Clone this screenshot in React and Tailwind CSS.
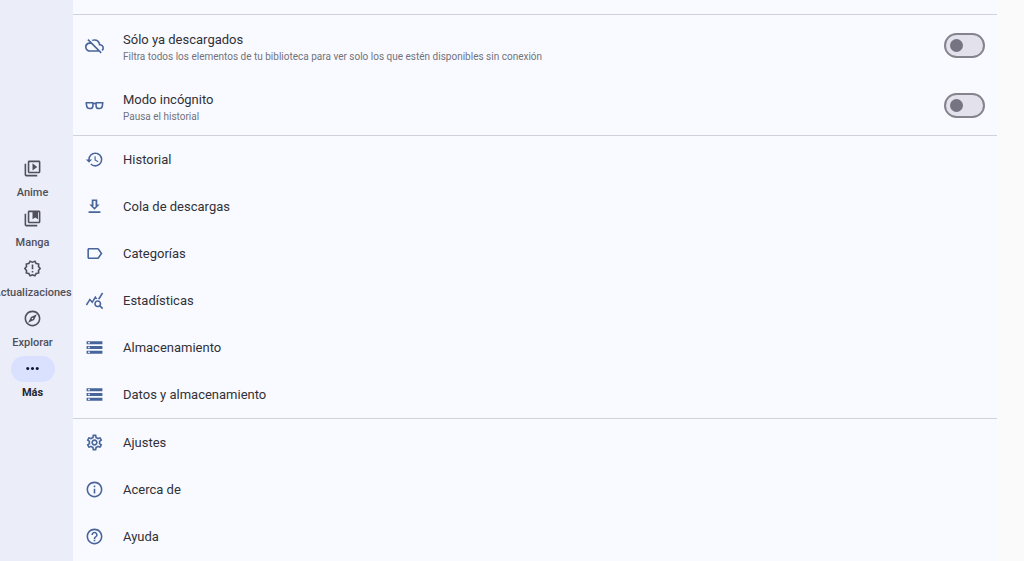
import { useState } from "react";
import {
  MdOutlineVideoLibrary,
  MdOutlineNewReleases,
  MdOutlineExplore,
  MdMoreHoriz,
  MdOutlineCloudOff,
  MdHistory,
  MdLabelOutline,
  MdQueryStats,
  MdStorage,
  MdOutlineSettings,
  MdOutlineInfo,
  MdHelpOutline,
} from "react-icons/md";

function GlassesIcon({ className }) {
  return (
    <svg
      viewBox="0 0 24 24"
      className={className}
      fill="none"
      stroke="currentColor"
      strokeWidth="2"
      strokeLinejoin="round"
      aria-hidden="true"
    >
      <path d="M1.500 8.500H10v3.700c0 2.200-1.400 3.600-3.400 3.600H5.600c-2 0-3.200-1.200-3.500-3.200z" />
      <path d="M22.500 8.500H14v3.700c0 2.200 1.400 3.600 3.400 3.600h1c2 0 3.200-1.200 3.500-3.200z" />
      <path d="M10 9.500h4" />
    </svg>
  );
}

function DownloadIcon({ className }) {
  return (
    <svg viewBox="0 0 24 24" className={className} fill="currentColor" aria-hidden="true">
      <path d="M18.500 9.500H15.500V3h-7v6.500H5.500l6.500 6.500zM10.700 11.500V5.200h2.600v6.300h.6L12 13.400l-1.900-1.900zM4.500 18h15v2.200h-15z" />
    </svg>
  );
}

function BookmarksIcon({ className }) {
  return (
    <svg viewBox="0 0 24 24" className={className} fill="currentColor" aria-hidden="true">
      <path d="M4 6H2v14c0 1.100.9 2 2 2h14v-2H4z" />
      <path
        fillRule="evenodd"
        d="M20 2H8c-1.100 0-2 .9-2 2v12c0 1.100.9 2 2 2h12c1.100 0 2-.9 2-2V4c0-1.100-.9-2-2-2zM8 4h4v9l3.500-2.200L19 13V4h1v12H8z"
      />
    </svg>
  );
}

const navItems = [
  { label: "Anime", Icon: MdOutlineVideoLibrary },
  { label: "Manga", Icon: BookmarksIcon },
  { label: "Actualizaciones", Icon: MdOutlineNewReleases },
  { label: "Explorar", Icon: MdOutlineExplore },
  { label: "Más", Icon: MdMoreHoriz, active: true },
];

const libraryItems = [
  { label: "Historial", Icon: MdHistory },
  { label: "Cola de descargas", Icon: DownloadIcon },
  { label: "Categorías", Icon: MdLabelOutline },
  { label: "Estadísticas", Icon: MdQueryStats },
  { label: "Almacenamiento", Icon: MdStorage },
  { label: "Datos y almacenamiento", Icon: MdStorage },
];

const appItems = [
  { label: "Ajustes", Icon: MdOutlineSettings },
  { label: "Acerca de", Icon: MdOutlineInfo },
  { label: "Ayuda", Icon: MdHelpOutline },
];

function NavItem({ label, Icon, active }) {
  return (
    <a
      href="#"
      aria-current={active ? "page" : undefined}
      className={
        "flex w-[65px] flex-col items-center gap-[3px] text-[11px] leading-4 " +
        (active ? "font-bold text-[#26262d]" : "font-medium text-[#50505a]")
      }
    >
      <span
        className={
          "flex h-[26px] w-11 items-center justify-center rounded-full " +
          (active ? "bg-[#dae1ff] text-[#101a3a]" : "")
        }
      >
        <Icon className="size-[19px]" />
      </span>
      <span className="whitespace-nowrap">{label}</span>
    </a>
  );
}

function ToggleRow({ id, title, subtitle, Icon }) {
  const [on, setOn] = useState(false);
  return (
    <li className="flex h-[60px] items-center px-3">
      <Icon className="size-[19px] shrink-0 text-[#48659b]" />
      <label htmlFor={id} className="ml-[19px] flex min-w-0 flex-1 flex-col pt-[3px]">
        <span className="text-[13px] leading-5">{title}</span>
        <span className="text-[10px] leading-[14px] text-[#72727a]">{subtitle}</span>
      </label>
      <input
        id={id}
        type="checkbox"
        role="switch"
        checked={on}
        onChange={() => setOn(!on)}
        className="flex h-[25px] w-[41px] shrink-0 appearance-none items-center rounded-full border-2 border-[#85848e] bg-[#e2e1ec] px-1 before:size-[13px] before:rounded-full before:bg-[#757480] checked:justify-end checked:border-[#3f5f98] checked:bg-[#3f5f98] checked:before:bg-white"
      />
    </li>
  );
}

function LinkRow({ label, Icon }) {
  return (
    <li>
      <a href="#" className="flex h-[47px] items-center gap-[19px] px-3 text-[13px] leading-5">
        <Icon className="size-[19px] shrink-0 text-[#48659b]" />
        {label}
      </a>
    </li>
  );
}

export default function App() {
  return (
    <div className="flex h-screen overflow-hidden bg-[#fafafa] font-['Roboto',sans-serif] text-[#303138]">
      <nav className="flex w-[73px] shrink-0 flex-col justify-center gap-[5px] overflow-hidden bg-[#ebedf8] pb-[5px]">
        {navItems.map((item) => (
          <NavItem key={item.label} {...item} />
        ))}
      </nav>
      <main className="mr-[27px] flex-1 overflow-hidden bg-[#f9faff] pt-[14px]">
        <ul className="border-y border-[#cfd1dc]">
          <ToggleRow
            id="downloaded-only"
            title="Sólo ya descargados"
            subtitle="Filtra todos los elementos de tu biblioteca para ver solo los que estén disponibles sin conexión"
            Icon={MdOutlineCloudOff}
          />
          <ToggleRow
            id="incognito"
            title="Modo incógnito"
            subtitle="Pausa el historial"
            Icon={GlassesIcon}
          />
        </ul>
        <ul className="border-b border-[#cfd1dc]">
          {libraryItems.map((item) => (
            <LinkRow key={item.label} {...item} />
          ))}
        </ul>
        <ul>
          {appItems.map((item) => (
            <LinkRow key={item.label} {...item} />
          ))}
        </ul>
      </main>
    </div>
  );
}
